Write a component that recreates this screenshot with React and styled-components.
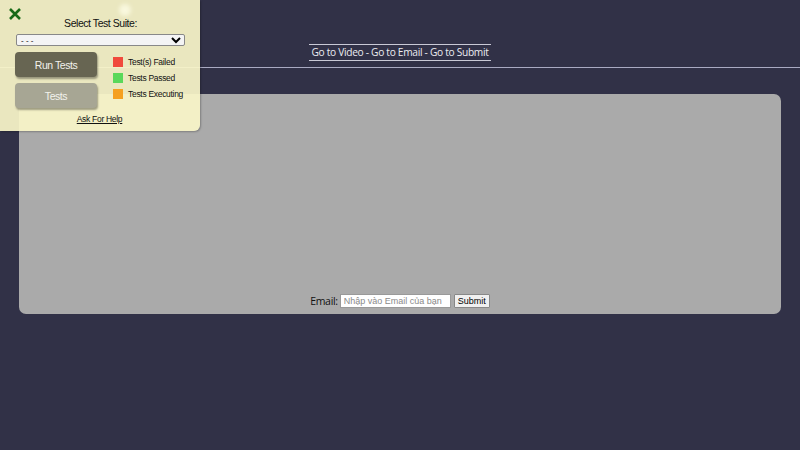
import React from "react";
import styled, { createGlobalStyle } from "styled-components";

const Global = createGlobalStyle`
  html, body { margin: 0; padding: 0; background: #313147; }
  body { font-family: "Open Sans", "Liberation Sans", sans-serif; width: 800px; height: 450px; overflow: hidden; }
`;

const Page = styled.div`
  position: relative;
  width: 800px;
  height: 450px;
  padding-top: 44px;
  box-sizing: border-box;
`;

const NavWrap = styled.div`
  display: flex;
  justify-content: center;
`;

const Nav = styled.div`
  border-top: 1px solid #c9c9d6;
  border-bottom: 1px solid #c9c9d6;
  color: #ececf2;
  font-size: 10.2px;
  letter-spacing: -0.3px;
  line-height: 15px;
  padding: 0 2px;
  text-align: center;
  white-space: nowrap;
`;

const Rule = styled.div`
  height: 1px;
  background: #a9aac2;
  margin-top: 6px;
`;

const Stage = styled.div`
  margin: 26px 19px 0;
  height: 220px;
  background: #aaaaaa;
  border-radius: 7px;
  display: flex;
  align-items: flex-end;
  justify-content: center;
  padding-bottom: 6px;
  box-sizing: border-box;
`;

const Form = styled.div`
  display: flex;
  align-items: center;
  gap: 2px;
  font-size: 10.5px;
  letter-spacing: -0.3px;
  color: #111;
`;

const Input = styled.input`
  width: 111px;
  height: 14px;
  box-sizing: border-box;
  border: 1px solid #999;
  padding: 0 3px;
  font-family: "Liberation Sans", Arial, sans-serif;
  font-size: 9px;
  letter-spacing: 0;
  background: #fff;
  &::placeholder { color: #8a8a8a; }
`;

const Submit = styled.button`
  height: 14px;
  padding: 0 3px;
  margin-left: 1px;
  font-family: "Liberation Sans", Arial, sans-serif;
  font-size: 9px;
  letter-spacing: 0;
  border: 1px solid #888;
  background: #f0f0f0;
  color: #000;
  border-radius: 1px;
  line-height: 12px;
`;

const Panel = styled.div`
  position: absolute;
  left: 0;
  top: 0;
  width: 200px;
  height: 131px;
  background: rgba(249, 245, 200, 0.93);
  border-bottom-right-radius: 6px;
  box-shadow: 1px 1px 2px rgba(0,0,0,0.25);
  font-family: "Liberation Sans", Arial, sans-serif;
  color: #111;
  box-sizing: border-box;
  padding: 17px 15px 0 16px;
`;

const Close = styled.svg`
  position: absolute;
  left: 8px;
  top: 7px;
`;

const Glow = styled.div`
  position: absolute;
  left: 119px;
  top: 4px;
  width: 12px;
  height: 12px;
  border-radius: 50%;
  background: rgba(255, 255, 235, 0.7);
  filter: blur(2px);
`;

const Title = styled.div`
  text-align: center;
  font-size: 10.5px;
  letter-spacing: -0.45px;
  line-height: 13px;
`;

const Select = styled.select`
  display: block;
  margin: 4px 0 0;
  width: 169px;
  height: 12px;
  font-size: 8px;
  padding: 0;
  border: 1px solid #888;
  background: #f4f4f4;
  border-radius: 2px;
  font-family: "Liberation Sans", Arial, sans-serif;
`;

const Body = styled.div`
  display: flex;
  margin-top: 6px;
  margin-left: -1px;
`;

const Buttons = styled.div`
  display: flex;
  flex-direction: column;
  gap: 6px;
  width: 82px;
`;

const Btn = styled.div`
  height: 25px;
  border-radius: 4px;
  background: ${p => (p.$dark ? "#676552" : "#a7a694")};
  color: #f2f2ec;
  font-size: 10.5px;
  letter-spacing: -0.45px;
  display: flex;
  align-items: center;
  justify-content: center;
  box-shadow: 1px 2px 2px rgba(0,0,0,0.35);
`;

const Legend = styled.div`
  display: flex;
  flex-direction: column;
  gap: 6px;
  margin-left: 16px;
  margin-top: 5px;
`;

const Item = styled.div`
  display: flex;
  align-items: center;
  gap: 5px;
  font-size: 8.5px;
  letter-spacing: -0.3px;
  line-height: 10px;
  white-space: nowrap;
`;

const Swatch = styled.span`
  width: 10px;
  height: 10px;
  flex: none;
  background: ${p => p.$c};
`;

const Help = styled.div`
  text-align: center;
  font-size: 8.5px;
  letter-spacing: -0.3px;
  text-decoration: underline;
  margin-top: 6px;
  margin-left: -2px;
`;

export default function App() {
  return (
    <>
      <Global />
      <Page>
        <NavWrap>
          <Nav>Go to Video - Go to Email - Go to Submit</Nav>
        </NavWrap>
        <Rule />
        <Stage>
          <Form>
            <span>Email:</span>
            <Input placeholder="Nhập vào Email của bạn" />
            <Submit>Submit</Submit>
          </Form>
        </Stage>
        <Panel>
          <Glow />
          <Close width="14" height="14" viewBox="0 0 14 14">
            <path d="M2 2 L12 12 M12 2 L2 12" stroke="#176a17" strokeWidth="2.6" strokeLinecap="butt" />
          </Close>
          <Title>Select Test Suite:</Title>
          <Select><option>- - -</option></Select>
          <Body>
            <Buttons>
              <Btn $dark>Run Tests</Btn>
              <Btn>Tests</Btn>
            </Buttons>
            <Legend>
              <Item><Swatch $c="#f04a3c" />Test(s) Failed</Item>
              <Item><Swatch $c="#5ad85a" />Tests Passed</Item>
              <Item><Swatch $c="#f5a020" />Tests Executing</Item>
            </Legend>
          </Body>
          <Help>Ask For Help</Help>
        </Panel>
      </Page>
    </>
  );
}
